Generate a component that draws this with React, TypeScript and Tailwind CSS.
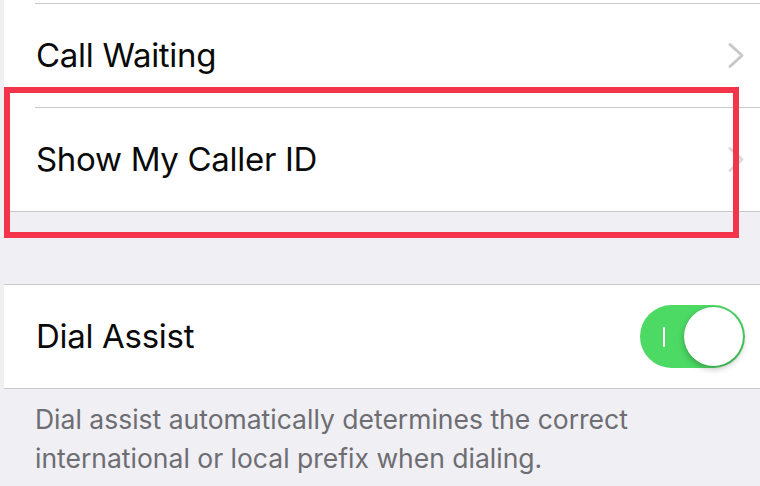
import React from "react";

const Chevron: React.FC<{ faded?: boolean }> = ({ faded }) => (
  <svg width="18" height="27" viewBox="0 0 18 27" fill="none" aria-hidden="true">
    <path
      d="M3 2.5 L15 13.5 L3 24.5"
      stroke={faded ? "#dadade" : "#c7c7cc"}
      strokeWidth="3"
      strokeLinecap="round"
      strokeLinejoin="round"
    />
  </svg>
);

const Toggle: React.FC = () => (
  <div className="relative w-[105px] h-[63px] rounded-full bg-[#4cd964]">
    <span className="absolute left-[23px] top-[22px] w-[2px] h-[20px] bg-white rounded-sm" />
    <span className="absolute right-[2px] top-[2px] size-[59px] rounded-full bg-white shadow-[0_3px_6px_rgba(0,0,0,0.25),0_0_1px_rgba(0,0,0,0.2)]" />
  </div>
);

interface RowProps {
  label: string;
  children?: React.ReactNode;
}

const Row: React.FC<RowProps> = ({ label, children }) => (
  <div className="h-[103px] flex items-center justify-between pl-[32px] pr-[15px]">
    <span className="text-[33px] text-[#0a0a0a] tracking-[-0.3px]">{label}</span>
    {children}
  </div>
);

export default function App() {
  return (
    <div
      className="relative w-[760px] h-[486px] overflow-hidden bg-[#efeff4] pl-[4px]"
      style={{ fontFamily: "Inter, 'Noto Sans', sans-serif" }}
    >
      {/* first group */}
      <div className="bg-white pt-[3px]">
        <div className="ml-[31px] h-[1px] bg-[#c8c7cc]" />
        <Row label="Call Waiting">
          <Chevron />
        </Row>
        <div className="ml-[31px] h-[1px] bg-[#c8c7cc]" />
        <Row label="Show My Caller ID">
          <Chevron faded />
        </Row>
        <div className="h-[1px] bg-[#c8c7cc]" />
      </div>

      <div className="h-[72px]" />

      {/* dial assist group */}
      <div className="bg-white">
        <div className="h-[1px] bg-[#c8c7cc]" />
        <Row label="Dial Assist">
          <Toggle />
        </Row>
        <div className="h-[1px] bg-[#c8c7cc]" />
      </div>

      <p className="pl-[31px] pt-[11px] text-[26.5px] leading-[39px] text-[#6d6d72]">
        Dial assist automatically determines the correct
        <br />
        international or local prefix when dialing.
      </p>

      {/* highlight box */}
      <div className="absolute left-[4px] top-[87px] w-[735px] h-[151px] border-[6px] border-[#f4344b]" />
    </div>
  );
}
